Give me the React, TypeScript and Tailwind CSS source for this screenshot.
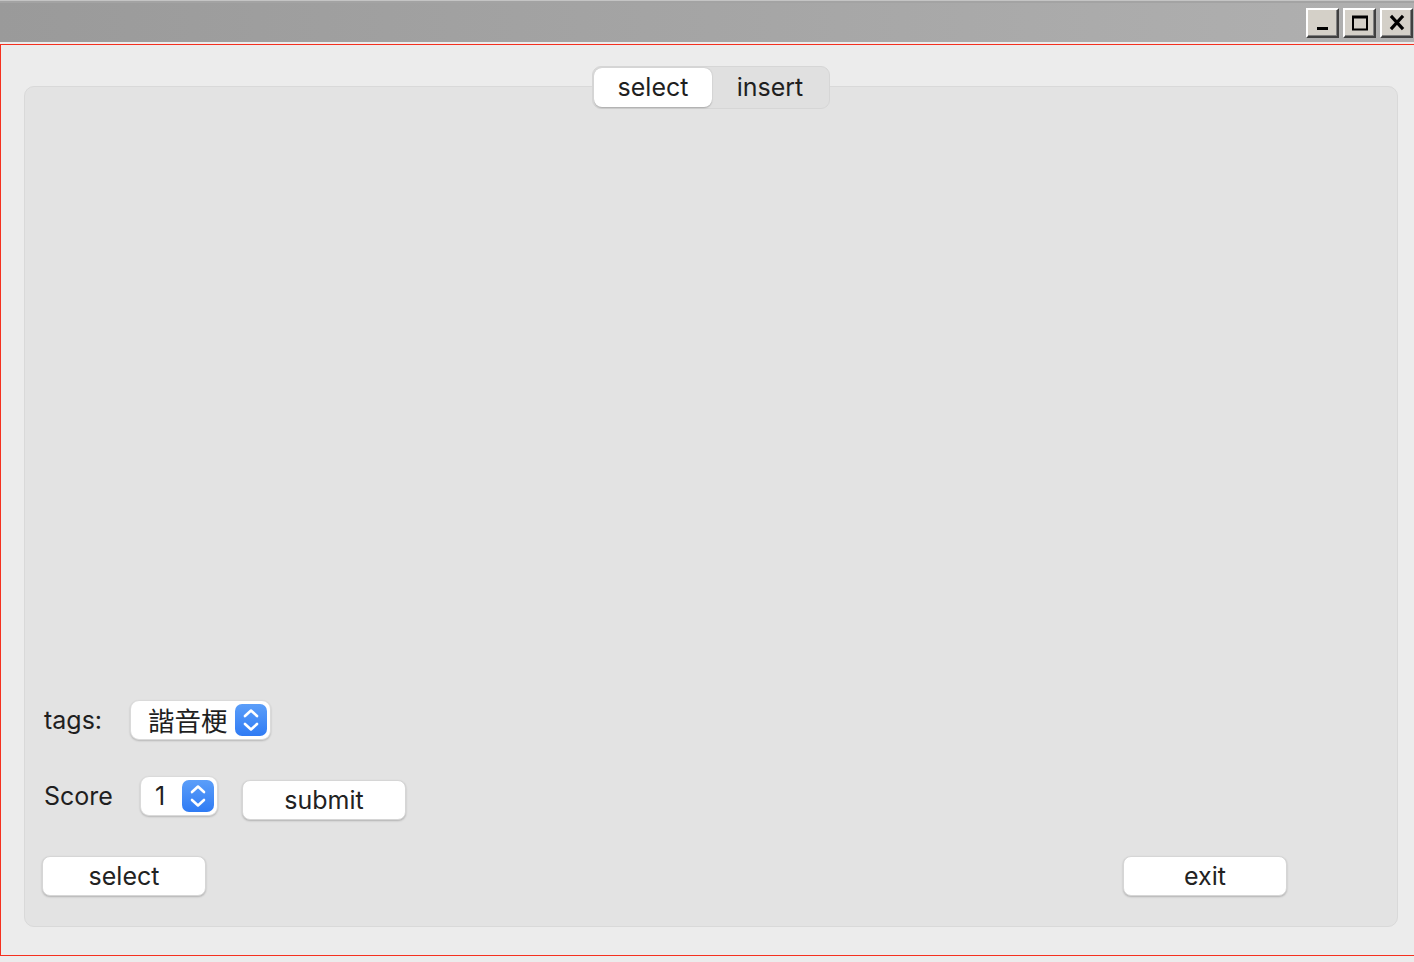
import React from 'react';

const font = { fontFamily: 'Inter, "Noto Sans CJK TC", "Liberation Sans", sans-serif' };

const Stepper: React.FC = () => (
  <div className="w-[32px] h-[32px] rounded-[7px] bg-gradient-to-b from-[#5b9ef9] to-[#2f7bf4] flex items-center justify-center">
    <svg width="20" height="28" viewBox="0 0 20 28" fill="none" stroke="white" strokeWidth="2.6" strokeLinecap="round" strokeLinejoin="round">
      <path d="M4 10 L10 4.5 L16 10" />
      <path d="M4 18 L10 23.5 L16 18" />
    </svg>
  </div>
);

const PushButton: React.FC<{ label: string }> = ({ label }) => (
  <button className="w-[164px] h-[40px] rounded-[8px] bg-white border border-[#d6d6d6] shadow-[0_1px_2px_rgba(0,0,0,0.22)] text-[25px] text-[#222] leading-none flex items-center justify-center">
    {label}
  </button>
);

const TitleButton: React.FC<{ kind: 'min' | 'max' | 'close' }> = ({ kind }) => (
  <div className="w-[33px] h-[30px] bg-[#d4d0c8] border-t-2 border-l-2 border-t-white border-l-white border-b-2 border-r-2 border-b-[#404040] border-r-[#404040] shadow-[inset_-1px_-1px_0_#808080] flex items-center justify-center">
    <svg width="20" height="18" viewBox="0 0 20 18">
      {kind === 'min' && <rect x="4" y="13" width="11" height="3" fill="black" />}
      {kind === 'max' && (
        <g fill="none" stroke="black">
          <rect x="3" y="2.5" width="14" height="13" strokeWidth="2" />
          <line x1="3" y1="3.5" x2="17" y2="3.5" strokeWidth="2" />
        </g>
      )}
      {kind === 'close' && (
        <g stroke="black" strokeWidth="3.2" strokeLinecap="square">
          <line x1="5" y1="3" x2="15" y2="14" />
          <line x1="15" y1="3" x2="5" y2="14" />
        </g>
      )}
    </svg>
  </div>
);

export default function App() {
  return (
    <div className="w-[1414px] h-[962px] bg-[#ececec] overflow-hidden text-[#1f1f1f]" style={font}>
      {/* title bar */}
      <div className="h-[42px] flex flex-col">
        <div className="h-[1px] bg-[#c4c4c4]" />
        <div className="h-[2px] bg-[#a3a3a3]" />
        <div className="flex-1 bg-gradient-to-r from-[#9a9a9a] to-[#b0b0b0] flex items-start justify-end pt-[5px] pr-[1px] gap-[4px]">
          <TitleButton kind="min" />
          <TitleButton kind="max" />
          <TitleButton kind="close" />
        </div>
      </div>

      {/* window */}
      <div className="mt-[2px] h-[912px] border-l border-t border-b border-[#f5301f] pl-[23px] pr-[16px] pt-[21px] pb-[28px] flex flex-col">
        <div className="flex flex-col items-center flex-1">
          <div className="relative z-10 h-[43px] w-[238px] rounded-[9px] bg-[#e0e0e0] border border-[#d6d6d6] flex items-center p-[1px]">
            <div className="w-[118px] h-full rounded-[8px] bg-white shadow-[0_0.5px_1.5px_rgba(0,0,0,0.25)] flex items-center justify-center text-[25px] leading-none">
              select
            </div>
            <div className="flex-1 h-full flex items-center justify-center text-[25px] leading-none">insert</div>
          </div>

          <div className="-mt-[23px] w-full flex-1 rounded-[10px] bg-[#e3e3e3] border border-[#d9d9d9] flex flex-col justify-end pl-[17px] pb-[30px]">
            {/* tags */}
            <div className="flex items-center h-[40px]">
              <span className="ml-[2px] w-[86px] text-[25px] leading-none">tags:</span>
              <div className="w-[141px] h-[40px] rounded-[9px] bg-white border border-[#dadada] shadow-[0_1px_2px_rgba(0,0,0,0.2)] flex items-center pl-[17px] pr-[3px]">
                <span className="text-[26.5px] leading-none flex-1" style={{ fontFamily: '"Noto Sans CJK TC", sans-serif' }}>
                  諧音梗
                </span>
                <Stepper />
              </div>
            </div>

            {/* score */}
            <div className="flex items-start mt-[36px] h-[44px]">
              <div className="h-[40px] flex items-center ml-[2px] w-[96px]">
                <span className="text-[25px] leading-none">Score</span>
              </div>
              <div className="w-[78px] h-[40px] rounded-[9px] bg-white border border-[#dadada] shadow-[0_1px_2px_rgba(0,0,0,0.2)] flex items-center pl-[14px] pr-[3px]">
                <span className="text-[25px] leading-none flex-1">1</span>
                <Stepper />
              </div>
              <div className="mt-[4px] ml-[24px]">
                <PushButton label="submit" />
              </div>
            </div>

            {/* bottom */}
            <div className="flex items-center mt-[36px] pr-[110px]">
              <PushButton label="select" />
              <div className="flex-1" />
              <PushButton label="exit" />
            </div>
          </div>
        </div>
      </div>
    </div>
  );
}
